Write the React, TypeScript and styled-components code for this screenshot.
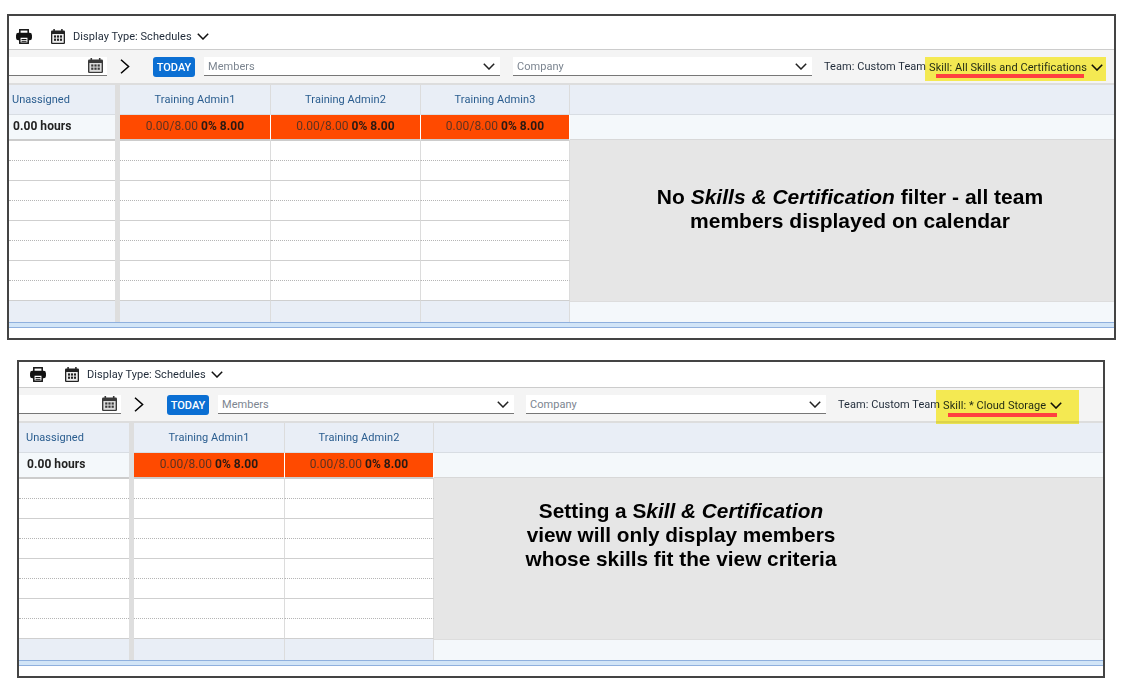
import React from "react";
import styled, { createGlobalStyle } from "styled-components";

const GlobalStyle = createGlobalStyle`
  * { box-sizing: border-box; }
  html, body { margin: 0; padding: 0; background: #fff; }
  body { font-family: Roboto, "Liberation Sans", sans-serif; letter-spacing: 0.05px; }
`;

const Page = styled.div`
  width: 1124px;
  height: 686px;
  padding-top: 14px;
  overflow: hidden;
`;

const Panel = styled.section<{ $left: number; $width: number; $top: number }>`
  width: ${(p) => p.$width}px;
  margin-left: ${(p) => p.$left}px;
  margin-top: ${(p) => p.$top}px;
  border: 2px solid #444;
  background: #fff;
`;

const TopBar = styled.div<{ $height: number; $pad: number }>`
  display: flex;
  align-items: center;
  height: ${(p) => p.$height}px;
  padding-left: ${(p) => p.$pad}px;
  padding-top: ${(p) => (p.$height > 30 ? 8 : 0)}px;
  border-bottom: 1px solid #ccc;
`;

const PrintSlot = styled.span`
  display: flex;
  width: 35px;
`;

const DisplaySlot = styled.span`
  display: flex;
  align-items: center;
  font-size: 11px;
  color: #1f2a38;
`;

const DisplayLabel = styled.span`
  margin: 0 5px 0 8px;
`;

const FilterBar = styled.div`
  position: relative;
  display: flex;
  align-items: flex-start;
  height: 35px;
  padding-top: 7px;
  background: #f4f4f4;
  border-bottom: 2px solid #ddd;
`;

const DateField = styled.div<{ $width: number }>`
  display: flex;
  justify-content: flex-end;
  align-items: center;
  width: ${(p) => p.$width}px;
  height: 19px;
  padding: 0 4px 2px 0;
  background: #fff;
  border-bottom: 1px solid #777;
`;

const NextButton = styled.span`
  display: flex;
  margin: 2px 23px 0 13px;
`;

const TodayButton = styled.button`
  width: 42px;
  height: 20px;
  padding: 0;
  border: 0;
  border-radius: 3px;
  background: #0b6fd3;
  color: #fff;
  font-family: inherit;
  font-size: 11px;
  font-weight: 500;
`;

const SelectField = styled.div<{ $width: number; $left: number }>`
  display: flex;
  justify-content: space-between;
  align-items: center;
  width: ${(p) => p.$width}px;
  height: 19px;
  margin-left: ${(p) => p.$left}px;
  padding: 0 5px 0 4px;
  background: #fff;
  border-bottom: 1px solid #777;
  font-size: 11px;
  color: #7c8590;
`;

const TeamLabel = styled.span`
  margin-left: 12px;
  padding-top: 3px;
  font-size: 11px;
  color: #1f2a38;
  white-space: nowrap;
`;

const SkillFilter = styled.span`
  position: relative;
  display: flex;
  align-items: center;
  height: 14px;
  margin: 3px 0 0 3px;
  font-size: 11px;
  color: #1f2a38;
  white-space: nowrap;
`;

const SkillChevron = styled.span`
  display: flex;
  margin-left: 4px;
`;

/* the marker-pen annotation drawn on top of the screenshot */
const Highlight = styled.span<{ $top: number; $bottom: number; $left: number; $right: number }>`
  position: absolute;
  top: ${(p) => p.$top}px;
  bottom: ${(p) => p.$bottom}px;
  left: ${(p) => p.$left}px;
  right: ${(p) => p.$right}px;
  background: #fff455;
  mix-blend-mode: multiply;
`;

const RedLine = styled.span<{ $left: number; $width: number; $top: number }>`
  position: absolute;
  top: ${(p) => p.$top}px;
  left: ${(p) => p.$left}px;
  width: ${(p) => p.$width}px;
  height: 4px;
  background: #ff4040;
`;

const Sheet = styled.div`
  display: flex;
  height: 237px;
`;

const Column = styled.div<{ $width?: number; $gutter?: boolean }>`
  display: flex;
  flex-direction: column;
  flex: ${(p) => (p.$width ? `0 0 ${p.$width}px` : "1 1 0")};
  min-width: 0;
  border-right: ${(p) => (p.$gutter ? "5px solid #dedede" : "none")};
`;

const HeaderCell = styled.div<{ $pad?: number; $line?: boolean }>`
  display: flex;
  align-items: center;
  justify-content: ${(p) => (p.$pad ? "flex-start" : "center")};
  height: 30px;
  padding-left: ${(p) => p.$pad || 0}px;
  background: #e9eef6;
  border-bottom: 1px solid #d8dde3;
  border-right: ${(p) => (p.$line ? "1px solid #dcdcdc" : "none")};
  font-size: 11px;
  color: #2a5d8f;
`;

const HoursCell = styled.div<{ $pad?: number; $thin?: boolean }>`
  display: flex;
  align-items: center;
  height: ${(p) => (p.$thin ? 25 : 26)}px;
  padding: 0 0 2px ${(p) => p.$pad || 0}px;
  background: #f4f8fb;
  border-bottom: ${(p) => (p.$thin ? "1px solid #d8d8d8" : "2px solid #ccc")};
  font-size: 12px;
  font-weight: 700;
  color: #222;
`;

const LoadCell = styled.div`
  display: flex;
  align-items: center;
  justify-content: center;
  height: 26px;
  padding-bottom: 2px;
  gap: 3px;
  background: #ff4a00;
  border-right: 1px solid #fff;
  border-bottom: 2px solid #ccc;
  font-size: 12px;
  color: #5e3220;
`;

const LoadStrong = styled.b`
  color: #2a1a12;
`;

const BodyRow = styled.div<{ $dotted: boolean; $line?: boolean }>`
  height: 20px;
  border-bottom: 1px ${(p) => (p.$dotted ? "dotted #b5b5b5" : "solid #cfcfcf")};
  border-right: ${(p) => (p.$line ? "1px solid #dcdcdc" : "none")};
`;

const FooterCell = styled.div<{ $line?: boolean; $pale?: boolean }>`
  flex: 1;
  background: ${(p) => (p.$pale ? "#f4f8fb" : "#e9eef6")};
  border-right: ${(p) => (p.$line ? "1px solid #dcdcdc" : "none")};
`;

const Callout = styled.div<{ $padding: string; $size: number }>`
  display: flex;
  flex-direction: column;
  align-items: center;
  justify-content: center;
  height: 162px;
  padding: ${(p) => p.$padding};
  background: #e6e6e6;
  border-bottom: 1px solid #ddd;
  font-family: "Liberation Sans", Arial, sans-serif;
  font-size: ${(p) => p.$size}px;
  font-weight: 700;
  line-height: 24px;
  letter-spacing: 0;
  color: #000;
  text-align: center;
`;

const Strip = styled.div`
  height: 6px;
  background: #d2e5f7;
  border-top: 1px solid #8fb0de;
  border-bottom: 1px solid #8fb0de;
`;

const PanelFoot = styled.div`
  height: 10px;
`;

const Chevron = ({ color = "#111", weight = 1.5 }: { color?: string; weight?: number }) => (
  <svg width="12" height="7" viewBox="0 0 12 7" fill="none">
    <path d="M0.8 0.8 L6 6 L11.2 0.8" stroke={color} strokeWidth={weight} />
  </svg>
);

const NextIcon = () => (
  <svg width="10" height="15" viewBox="0 0 10 15" fill="none">
    <path d="M1 0.7 L8.6 7.5 L1 14.3" stroke="#000" strokeWidth="1.5" />
  </svg>
);

const PrinterIcon = () => (
  <svg width="16" height="15" viewBox="0 0 16 15" fill="none">
    <rect x="3.8" y="0.8" width="8.4" height="4" fill="#fff" stroke="#111" strokeWidth="1.5" />
    <rect x="0.8" y="4.6" width="14.4" height="6" rx="1.6" fill="#111" stroke="#111" strokeWidth="1.5" />
    <rect x="3.8" y="8" width="8.4" height="6.2" fill="#fff" stroke="#111" strokeWidth="1.5" />
    <path d="M5.5 10.5 H10.5 M5.5 12.3 H10.5" stroke="#111" strokeWidth="1" />
  </svg>
);

const CalendarIcon = ({ face, body, width }: { face: string; body: string; width: number }) => (
  <svg width={width} height="15" viewBox="0 0 15 15" preserveAspectRatio="none">
    <rect x="0" y="1.5" width="15" height="13.5" rx="1.2" fill={body} />
    <rect x="2.5" y="0" width="1.6" height="3" fill={body} />
    <rect x="10.9" y="0" width="1.6" height="3" fill={body} />
    <rect x="1.4" y="5" width="12.2" height="8.8" fill={face} />
    {[3.2, 6.4, 9.6].map((x) =>
      [6.4, 9.6].map((y) => <rect key={`${x}-${y}`} x={x} y={y} width="2.2" height="2.2" fill={body} />)
    )}
  </svg>
);

type ScheduleProps = {
  left: number;
  width: number;
  top: number;
  topBarHeight: number;
  topBarPad: number;
  dateWidth: number;
  companyLeft: number;
  companyWidth: number;
  skill: string;
  mark: { top: number; bottom: number; left: number; right: number };
  line: { left: number; width: number; top: number };
  unassignedWidth: number;
  unassignedPad: number;
  members: { name: string; width: number }[];
  calloutPadding: string;
  calloutSize: number;
  callout: React.ReactNode;
};

const rows = [true, false, true, false, true, false, true, false];

const Schedule = (p: ScheduleProps) => (
  <Panel $left={p.left} $width={p.width} $top={p.top}>
    <TopBar $height={p.topBarHeight} $pad={p.topBarPad}>
      <PrintSlot>
        <PrinterIcon />
      </PrintSlot>
      <DisplaySlot>
        <CalendarIcon face="#eee" body="#222" width={14} />
        <DisplayLabel>Display Type: Schedules</DisplayLabel>
        <Chevron />
      </DisplaySlot>
    </TopBar>
    <FilterBar>
      <DateField $width={p.dateWidth}>
        <CalendarIcon face="#dedede" body="#3a3a3a" width={15} />
      </DateField>
      <NextButton>
        <NextIcon />
      </NextButton>
      <TodayButton>TODAY</TodayButton>
      <SelectField $width={296} $left={9}>
        Members
        <Chevron color="#222" />
      </SelectField>
      <SelectField $width={p.companyWidth} $left={p.companyLeft}>
        Company
        <Chevron color="#222" />
      </SelectField>
      <TeamLabel>Team: Custom Team</TeamLabel>
      <SkillFilter>
        {p.skill}
        <SkillChevron>
          <Chevron color="#111" weight={1.6} />
        </SkillChevron>
        <Highlight $top={p.mark.top} $bottom={p.mark.bottom} $left={p.mark.left} $right={p.mark.right} />
        <RedLine $left={p.line.left} $width={p.line.width} $top={p.line.top} />
      </SkillFilter>
    </FilterBar>
    <Sheet>
      <Column $width={p.unassignedWidth} $gutter>
        <HeaderCell $pad={p.unassignedPad}>Unassigned</HeaderCell>
        <HoursCell $pad={p.unassignedPad + 1}>0.00 hours</HoursCell>
        {rows.map((dotted, i) => (
          <BodyRow key={i} $dotted={dotted} />
        ))}
        <FooterCell />
      </Column>
      {p.members.map((m) => (
        <Column key={m.name} $width={m.width}>
          <HeaderCell $line>{m.name}</HeaderCell>
          <LoadCell>
            0.00/8.00 <LoadStrong>0% 8.00</LoadStrong>
          </LoadCell>
          {rows.map((dotted, i) => (
            <BodyRow key={i} $dotted={dotted} $line />
          ))}
          <FooterCell $line />
        </Column>
      ))}
      <Column>
        <HeaderCell />
        <HoursCell $thin />
        <Callout $padding={p.calloutPadding} $size={p.calloutSize}>
          {p.callout}
        </Callout>
        <FooterCell $pale />
      </Column>
    </Sheet>
    <Strip />
    <PanelFoot />
  </Panel>
);

const App: React.FC = () => (
  <Page>
    <GlobalStyle />
    <Schedule
      left={7}
      width={1109}
      top={0}
      topBarHeight={34}
      topBarPad={7}
      dateWidth={98}
      companyLeft={13}
      companyWidth={299}
      skill="Skill: All Skills and Certifications"
      mark={{ top: -3, bottom: -7, left: -4, right: -3 }}
      line={{ left: 7, width: 148, top: 14 }}
      unassignedWidth={111}
      unassignedPad={3}
      members={[
        { name: "Training Admin1", width: 151 },
        { name: "Training Admin2", width: 150 },
        { name: "Training Admin3", width: 149 },
      ]}
      calloutPadding="0 0 24px 16px"
      calloutSize={21}
      callout={
        <>
          <span>
            No <i>Skills &amp; Certification</i> filter - all team
          </span>
          <span>members displayed on calendar</span>
        </>
      }
    />
    <Schedule
      left={17}
      width={1088}
      top={20}
      topBarHeight={26}
      topBarPad={11}
      dateWidth={102}
      companyLeft={12}
      companyWidth={300}
      skill="Skill: * Cloud Storage"
      mark={{ top: -8, bottom: -12, left: -7, right: -17 }}
      line={{ left: 5, width: 109, top: 15 }}
      unassignedWidth={115}
      unassignedPad={7}
      members={[
        { name: "Training Admin1", width: 151 },
        { name: "Training Admin2", width: 149 },
      ]}
      calloutPadding="0 175px 48px 0"
      calloutSize={20.8}
      callout={
        <>
          <span>
            Setting a S<i>kill &amp; Certification</i>
          </span>
          <span>view will only display members</span>
          <span>whose skills fit the view criteria</span>
        </>
      }
    />
  </Page>
);

export default App;
